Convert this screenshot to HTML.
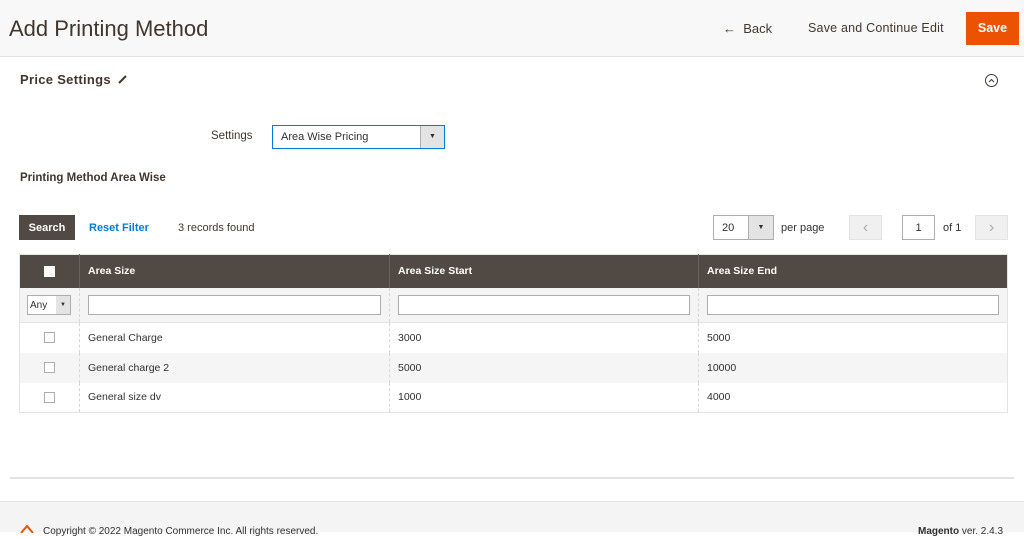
<!DOCTYPE html><html><head><style>
*{box-sizing:border-box;margin:0;padding:0}
body{width:1024px;height:532px;overflow:hidden;background:#fff;font-family:"Liberation Sans",sans-serif;color:#303030;position:relative}
.a{position:absolute;white-space:nowrap}
.hd{left:0;top:0;width:1024px;height:57px;background:#f8f8f8;border-bottom:1px solid #e3e3e3}
table{position:absolute;left:19px;top:254px;width:989px;border-collapse:collapse;font-size:10.5px}
td,th{height:30px;padding:0 8px;text-align:left;border-left:1px dashed #d6d6d6}
th{background:#514943;color:#fff;height:33px;border-left:1px solid #6a625c;font-size:10.5px}
tr td:first-child,tr th:first-child{border-left:none;text-align:center;width:60px}
.f td{background:#f4f4f4;height:35px;border-bottom:1px solid #e3e3e3}
.s td{background:#f5f5f5}
.cb{display:inline-block;width:11px;height:11px;border:1px solid #adadad;background:#fff;vertical-align:middle}
.in{width:100%;height:20px;border:1px solid #adadad;background:#fff}
table{border:1px solid #e3e3e3}
</style></head><body>
<div class="a hd"></div>
<div class="a" style="left:9px;top:16px;font-size:22px;color:#41362f">Add Printing Method</div>
<div class="a" style="left:723px;top:21px;font-size:13px;color:#41362f">&#8592;&nbsp;&nbsp;Back</div>
<div class="a" style="left:808px;top:21px;font-size:12.5px;color:#41362f;letter-spacing:.2px">Save and Continue Edit</div>
<div class="a" style="left:966px;top:12px;width:53px;height:33px;background:#eb5202;color:#fff;font-weight:bold;font-size:12.5px;text-align:center;line-height:33px">Save</div>
<div class="a" style="left:20px;top:72px;font-size:13px;font-weight:bold;color:#41362f;letter-spacing:.3px">Price Settings</div>
<svg class="a" style="left:117px;top:73px" width="12" height="12"><path d="M2 10 L9 3" stroke="#41362f" stroke-width="2"/></svg>
<div class="a" style="left:985px;top:74px;width:13px;height:13px;border:1px solid #41362f;border-radius:50%"></div>
<svg class="a" style="left:985px;top:74px" width="13" height="13"><path d="M4 8 L6.5 5.5 L9 8" stroke="#41362f" fill="none"/></svg>
<div class="a" style="left:211px;top:130px;font-size:11.5px;color:#41362f">Settings</div>
<div class="a" style="left:272px;top:125px;width:173px;height:24px;border:1px solid #007bdb;background:#fff;font-size:11px;padding:5px 8px">Area Wise Pricing</div>
<div class="a" style="left:420px;top:126px;width:24px;height:22px;background:#e3e3e3;border-left:1px solid #adadad;font-size:7px;text-align:center;line-height:22px">&#9660;</div>
<div class="a" style="left:20px;top:172px;font-size:11.5px;font-weight:bold;color:#41362f">Printing Method Area Wise</div>
<div class="a" style="left:19px;top:215px;width:56px;height:25px;background:#514943;color:#fff;font-weight:bold;font-size:11px;text-align:center;line-height:26px">Search</div>
<div class="a" style="left:89px;top:222px;font-size:11px;color:#007bdb;font-weight:bold">Reset Filter</div>
<div class="a" style="left:178px;top:222px;font-size:11px;color:#41362f">3 records found</div>
<div class="a" style="left:713px;top:215px;width:61px;height:25px;border:1px solid #adadad;font-size:11px;padding:6px 8px">20</div>
<div class="a" style="left:748px;top:216px;width:25px;height:23px;background:#e3e3e3;border-left:1px solid #adadad;font-size:7px;text-align:center;line-height:23px">&#9660;</div>
<div class="a" style="left:781px;top:222px;font-size:11px">per page</div>
<div class="a" style="left:849px;top:215px;width:33px;height:25px;background:#f0f0f0;border:1px solid #e3e3e3;color:#aaa;text-align:center;line-height:23px">&#8249;</div>
<div class="a" style="left:902px;top:215px;width:33px;height:25px;border:1px solid #adadad;font-size:11px;text-align:center;line-height:25px">1</div>
<div class="a" style="left:943px;top:222px;font-size:11px">of 1</div>
<div class="a" style="left:975px;top:215px;width:33px;height:25px;background:#f0f0f0;border:1px solid #e3e3e3;color:#aaa;text-align:center;line-height:23px">&#8250;</div>
<table>
<tr><th><span class="cb" style="border-color:#fff"></span></th><th style="width:310px">Area Size</th><th style="width:309px">Area Size Start</th><th>Area Size End</th></tr>
<tr class="f"><td style="padding:0 7px"><div style="width:44px;height:20px;border:1px solid #adadad;background:#fff;font-size:10px;text-align:left;padding:4px 2px;position:relative">Any<span style="position:absolute;right:0;top:0;width:14px;height:18px;background:#e3e3e3;font-size:6px;text-align:center;line-height:18px">&#9660;</span></div></td><td><div class="in"></div></td><td><div class="in"></div></td><td><div class="in"></div></td></tr>
<tr><td><span class="cb"></span></td><td>General Charge</td><td>3000</td><td>5000</td></tr>
<tr class="s"><td><span class="cb"></span></td><td>General charge 2</td><td>5000</td><td>10000</td></tr>
<tr><td><span class="cb"></span></td><td>General size dv</td><td>1000</td><td>4000</td></tr>
</table>
<div class="a" style="left:10px;top:477px;width:1004px;height:2px;background:#e3e3e3"></div>
<div class="a" style="left:0;top:501px;width:1024px;height:31px;background:#f4f4f4;border-top:1px solid #e3e3e3"></div>
<svg class="a" style="left:20px;top:525px" width="14" height="8"><path d="M1 8 L7 1 L13 8" stroke="#eb5202" stroke-width="2" fill="none"/></svg>
<div class="a" style="left:43px;top:526px;font-size:10px;color:#303030">Copyright © 2022 Magento Commerce Inc. All rights reserved.</div>
<div class="a" style="left:918px;top:526px;font-size:10px;color:#303030"><b>Magento</b> ver. 2.4.3</div>
</body></html>
